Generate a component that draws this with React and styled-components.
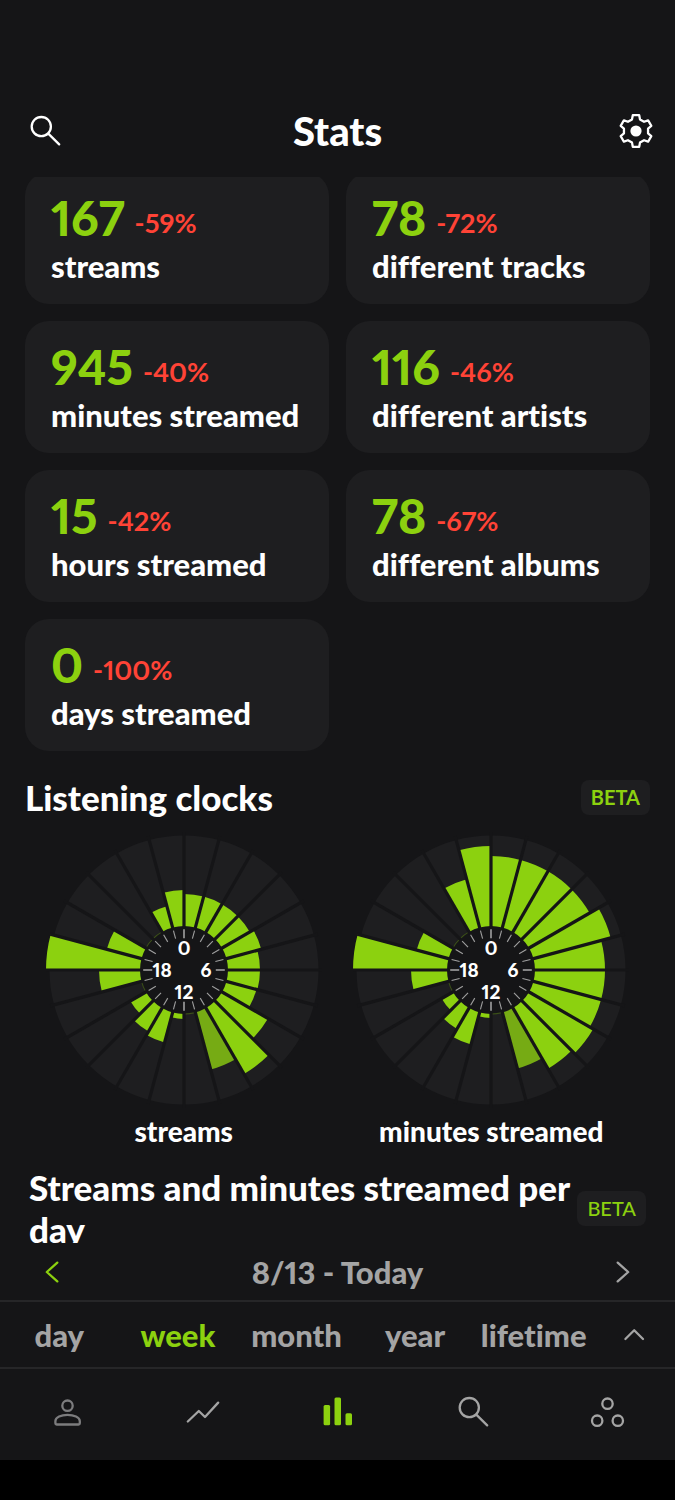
import { useState } from "react";
import styled, { createGlobalStyle, ThemeProvider } from "styled-components";

const theme = {
    bg: '#151517',
    card: '#1e1e20',
    line: '#262628',
    accent: '#8cd10f',
    accentDim: '#76ab14',
    negative: '#ff4336',
    muted: '#a4a4a4',
    faded: '#7c7c7e',
}

const GlobalStyle = createGlobalStyle`
    * {
        box-sizing: border-box;
    }
    body {
        margin: 0;
        background: #000;
        color: #fff;
        font-family: Lato, "Liberation Sans", sans-serif;
        font-weight: 900;
        font-variant-ligatures: none;
        font-variant-numeric: proportional-nums;
    }
    h1, h2, p, dl, dt, dd, figure {
        margin: 0;
    }
    button {
        border: none;
        padding: 0;
        background: transparent;
        color: inherit;
        font: inherit;
        font-variant-ligatures: none;
        cursor: pointer;
    }
`

const Screen = styled.div`
    display: flex;
    flex-direction: column;
    height: 100vh;
    padding-bottom: 40px;
    background: #000;
`

const Header = styled.header`
    display: grid;
    grid-template-columns: 1fr auto 1fr;
    align-items: center;
    padding: 84px 19px 0;
    height: 177px;
    flex: none;
    background: ${({theme}) => theme.bg};
`

const Title = styled.h1`
    font-size: 40px;
    line-height: 48px;
    font-weight: 900;
`

const IconButton = styled.button`
    display: flex;
    justify-content: flex-end;
    width: 46px;
    justify-self: ${({$end}) => $end ? 'end' : 'start'};
`

const Icon = styled.svg`
    display: block;
    width: 40px;
    height: 40px;
    fill: none;
    stroke: currentColor;
    stroke-width: 2.3;
    stroke-linejoin: round;
    stroke-linecap: round;
`

const Content = styled.main`
    flex: 1;
    min-height: 0;
    overflow: hidden;
    padding: 0 25px;
    background: ${({theme}) => theme.bg};
`

const Cards = styled.dl`
    display: grid;
    grid-template-columns: 1fr 1fr;
    gap: 17px;
    margin-top: -5px;
`

const Card = styled.div`
    padding: 18px 0 20px 26px;
    border-radius: 24px;
    background: ${({theme}) => theme.card};
    display: flex;
    flex-direction: column-reverse;
    gap: 2px;
    white-space: nowrap;
`

const CardLabel = styled.dt`
    font-size: 31px;
    line-height: 36px;
`

const CardValue = styled.dd`
    display: flex;
    align-items: flex-end;
    gap: 10px;
    font-size: 48px;
    line-height: 56px;
    color: ${({theme}) => theme.accent};
`

const Change = styled.span`
    font-size: 27px;
    line-height: 46px;
    font-weight: 700;
    color: ${({theme}) => theme.negative};
`

const SectionHead = styled.div`
    display: flex;
    align-items: center;
    justify-content: space-between;
    margin-top: ${({$inset}) => $inset ? '18px' : '25px'};
    padding: ${({$inset}) => $inset ? '0 4px' : '0'};
`

const SectionTitle = styled.h2`
    font-size: 35px;
    line-height: 42px;
    font-weight: 900;
`

const Badge = styled.span`
    flex: none;
    padding: 0 10px;
    border-radius: 8px;
    background: ${({theme}) => theme.card};
    color: ${({theme}) => theme.accent};
    font-size: 20px;
    line-height: 35px;
    font-weight: ${({$light}) => $light ? 500 : 700};
`

const Clocks = styled.div`
    display: grid;
    grid-template-columns: 1fr 1fr;
    margin-top: 14px;
    padding: 0 5px;
`

const Clock = styled.figure`
    display: flex;
    flex-direction: column;
    align-items: center;
    gap: 6px;
`

const Dial = styled.svg`
    display: block;
    width: 276px;
    height: 276px;
    text {
        fill: #fff;
        font-size: 19px;
        text-anchor: middle;
    }
`

const ClockLabel = styled.figcaption`
    font-size: 28px;
    line-height: 34px;
`

const Range = styled.div`
    flex: none;
    display: flex;
    align-items: center;
    justify-content: space-between;
    height: 57px;
    padding: 0 32px;
    background: ${({theme}) => theme.bg};
    color: ${({theme}) => theme.muted};
    font-size: 31px;
    line-height: 36px;
`

const RangeButton = styled.button`
    && {
        color: ${({theme, $active}) => $active ? theme.accent : theme.muted};
    }
`

const Periods = styled.div`
    flex: none;
    display: flex;
    align-items: center;
    height: 67px;
    padding-right: 21px;
    border-top: 2px solid ${({theme}) => theme.line};
    background: ${({theme}) => theme.bg};
    color: ${({theme}) => theme.muted};
`

const PeriodList = styled.div`
    flex: 1;
    display: flex;
    align-self: stretch;
    margin-right: 21px;
`

const Period = styled.button`
    && {
        flex: 1 1 0;
        min-width: 0;
        font-size: 31px;
        line-height: 36px;
        color: ${({theme, $active}) => $active ? theme.accent : theme.muted};
    }
`

const NavBar = styled.nav`
    flex: none;
    display: flex;
    height: 93px;
    padding-bottom: 5px;
    border-top: 2px solid ${({theme}) => theme.line};
    background: ${({theme}) => theme.bg};
`

const NavLink = styled.a`
    flex: 1 1 0;
    display: flex;
    align-items: center;
    justify-content: center;
    color: ${({theme, $tone}) => theme[$tone]};
`

const SearchIcon = () => (
    <Icon viewBox="0 0 40 40" aria-hidden="true">
        <circle cx="16.3" cy="15.6" r="9.6"/>
        <path d="M23.3 22.6 34.2 33.4"/>
    </Icon>
)

const GearIcon = () => (
    <Icon viewBox="-20 -20 40 40" aria-hidden="true">
        <path d="M-3.2-15.8H3.2L4-11.6 8.05-9.26 12.1-10.7 15.3-5.1 12.05-2.34V2.34L15.3 5.1 12.1 10.7 8.05 9.26 4 11.6 3.2 15.8H-3.2L-4 11.6-8.05 9.26-12.1 10.7-15.3 5.1-12.05 2.34V-2.34L-15.3-5.1-12.1-10.7-8.05-9.26-4-11.6Z"/>
        <circle r="5.6" fill="currentColor" stroke="none"/>
    </Icon>
)

const PersonIcon = () => (
    <Icon viewBox="0.8 0 40 40" aria-hidden="true">
        <circle cx="20.3" cy="13.7" r="5.2"/>
        <path d="M8.2 31.2V29C8.2 25.2 14 22.8 20.3 22.8S32.6 25.2 32.6 29V31.2Q32.6 32.5 31.3 32.5H9.5Q8.2 32.5 8.2 31.2Z"/>
    </Icon>
)

const TrendIcon = () => (
    <Icon viewBox="0.8 0 40 40" aria-hidden="true">
        <path d="M5.6 29.5 16.6 19 22.8 25 36 10.6"/>
    </Icon>
)

const BarsIcon = () => (
    <Icon viewBox="0.8 0 40 40" aria-hidden="true">
        <g fill="currentColor" stroke="none">
            <rect x="6.4" y="13" width="6.5" height="20.3" rx="1.5"/>
            <rect x="17.3" y="5.4" width="6.5" height="27.9" rx="1.5"/>
            <rect x="28.3" y="21.2" width="6.5" height="12.1" rx="1.5"/>
        </g>
    </Icon>
)

const GroupIcon = () => (
    <Icon viewBox="0.8 0 40 40" aria-hidden="true">
        <circle cx="20.3" cy="11.7" r="5.2"/>
        <circle cx="10" cy="28.7" r="5.2"/>
        <circle cx="30.6" cy="28.7" r="5.2"/>
    </Icon>
)

const chevrons = {
    left: 'M25.3 10.6 14.8 20 25.3 29.4',
    right: 'M14.7 10.6 25.2 20 14.7 29.4',
    up: 'M11.4 24 20.2 15.2 29 24',
}

const Chevron = ({dir}) => (
    <Icon viewBox="0 0 40 40" aria-hidden="true">
        <path d={chevrons[dir]}/>
    </Icon>
)

const cards = [
    {value: 167, change: '-59%', label: 'streams'},
    {value: 78, change: '-72%', label: 'different tracks'},
    {value: 945, change: '-40%', label: 'minutes streamed'},
    {value: 116, change: '-46%', label: 'different artists'},
    {value: 15, change: '-42%', label: 'hours streamed'},
    {value: 78, change: '-67%', label: 'different albums'},
    {value: 0, change: '-100%', label: 'days streamed'},
]

// bar length for every hour, midnight first
const clocks = [
    {
        label: 'streams',
        hours: [32, 32, 32, 32, 36, 32, 32, 31, 53, 76, 59, 0, 5, 31, 27, 18, 0, 41, 94, 36, 0, 0, 22, 36],
    },
    {
        label: 'minutes streamed',
        hours: [70, 70, 70, 70, 80, 70, 70, 70, 74, 70, 58, 0, 4, 33, 24, 13, 0, 36, 94, 33, 0, 0, 50, 80],
    },
]

const INNER = 44
const OUTER = 134.5
const CURRENT_HOUR = 10
const hourList = Array.from({length: 24}, (_, i) => i)

const point = (radius, hour) => {
    const angle = hour * Math.PI / 12
    return `${(radius * Math.sin(angle)).toFixed(2)} ${(-radius * Math.cos(angle)).toFixed(2)}`
}

const wedge = (from, to, hour) => (
    `M${point(from, hour)}L${point(to, hour)}A${to} ${to} 0 0 1 ${point(to, hour + 1)}` +
    `L${point(from, hour + 1)}A${from} ${from} 0 0 0 ${point(from, hour)}Z`
)

const ListeningClock = ({label, hours}) => (
    <Clock>
        <Dial viewBox="-138 -138 276 276" role="img" aria-label={label}>
            {hourList.map(h => (
                <path key={h} d={wedge(INNER, OUTER, h)} fill={theme.card}/>
            ))}
            {hours.map((value, h) => value > 0 ? (
                <path
                    key={h}
                    d={wedge(INNER, INNER + value, h)}
                    fill={h === CURRENT_HOUR ? theme.accentDim : theme.accent}
                />
            ) : (
                <path key={h} d={wedge(INNER - 0.5, INNER + 0.5, h)} fill={theme.accent} opacity="0.3"/>
            ))}
            {hourList.map(h => (
                <path key={h} d={`M${point(INNER - 2, h)}L${point(OUTER + 4, h)}`} stroke={theme.bg} strokeWidth="3.2"/>
            ))}
            {hourList.map(h => (
                <path
                    key={h}
                    d={`M${point(h % 6 ? 32.5 : 31.8, h)}L${point(40.8, h)}`}
                    stroke={h % 6 ? '#a0a0a0' : '#e0e0e0'}
                    strokeWidth="1.1"
                />
            ))}
            <text x="0" y="-15">0</text>
            <text x="22" y="7">6</text>
            <text x="0" y="29">12</text>
            <text x="-22" y="7">18</text>
        </Dial>
        <ClockLabel>{label}</ClockLabel>
    </Clock>
)

const periods = ['day', 'week', 'month', 'year', 'lifetime']

const links = [
    {name: 'Profile', icon: PersonIcon, tone: 'faded'},
    {name: 'Charts', icon: TrendIcon, tone: 'muted'},
    {name: 'Stats', icon: BarsIcon, tone: 'accent'},
    {name: 'Search', icon: SearchIcon, tone: 'muted'},
    {name: 'More', icon: GroupIcon, tone: 'muted'},
]

export default function App() {
    const [period, setPeriod] = useState('week')

    return (
        <ThemeProvider theme={theme}>
            <GlobalStyle/>
            <Screen>
                <Header>
                    <IconButton aria-label="Search"><SearchIcon/></IconButton>
                    <Title>Stats</Title>
                    <IconButton $end aria-label="Settings"><GearIcon/></IconButton>
                </Header>
                <Content>
                    <Cards>
                        {cards.map(({value, change, label}) => (
                            <Card key={label}>
                                <CardLabel>{label}</CardLabel>
                                <CardValue>{value}<Change>{change}</Change></CardValue>
                            </Card>
                        ))}
                    </Cards>
                    <SectionHead>
                        <SectionTitle>Listening clocks</SectionTitle>
                        <Badge>BETA</Badge>
                    </SectionHead>
                    <Clocks>
                        {clocks.map(clock => <ListeningClock key={clock.label} {...clock}/>)}
                    </Clocks>
                    <SectionHead $inset>
                        <SectionTitle>Streams and minutes streamed per day</SectionTitle>
                        <Badge $light>BETA</Badge>
                    </SectionHead>
                </Content>
                <Range>
                    <RangeButton $active aria-label="Previous week"><Chevron dir="left"/></RangeButton>
                    <span>8/13 - Today</span>
                    <RangeButton aria-label="Next week"><Chevron dir="right"/></RangeButton>
                </Range>
                <Periods>
                    <PeriodList>
                        {periods.map(name => (
                            <Period key={name} $active={name === period} onClick={() => setPeriod(name)}>{name}</Period>
                        ))}
                    </PeriodList>
                    <RangeButton aria-label="More periods"><Chevron dir="up"/></RangeButton>
                </Periods>
                <NavBar>
                    {links.map(({name, icon: LinkIcon, tone}) => (
                        <NavLink key={name} href={`#${name.toLowerCase()}`} $tone={tone} aria-label={name}>
                            <LinkIcon/>
                        </NavLink>
                    ))}
                </NavBar>
            </Screen>
        </ThemeProvider>
    )
}
